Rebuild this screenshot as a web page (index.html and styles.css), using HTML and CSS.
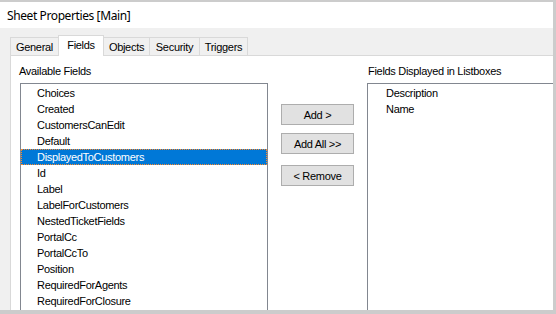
FILE: index.html
```html
<!DOCTYPE html>
<html>
<head>
<meta charset="utf-8">
<link rel="stylesheet" href="styles.css">
</head>
<body>
<div class="window">
  <div class="titlebar">Sheet Properties [Main]</div>
  <div class="client">
    <div class="tabs">
      <div class="tab t-general">General</div>
      <div class="tab t-fields selected">Fields</div>
      <div class="tab t-objects">Objects</div>
      <div class="tab t-security">Security</div>
      <div class="tab t-triggers">Triggers</div>
    </div>
    <div class="panel">
      <div class="label label-left">Available Fields</div>
      <div class="spacer"></div>
      <div class="label label-right">Fields Displayed in Listboxes</div>
      <div class="listbox list-left">
        <div class="item">Choices</div>
        <div class="item">Created</div>
        <div class="item">CustomersCanEdit</div>
        <div class="item">Default</div>
        <div class="item sel">DisplayedToCustomers</div>
        <div class="item">Id</div>
        <div class="item">Label</div>
        <div class="item">LabelForCustomers</div>
        <div class="item">NestedTicketFields</div>
        <div class="item">PortalCc</div>
        <div class="item">PortalCcTo</div>
        <div class="item">Position</div>
        <div class="item">RequiredForAgents</div>
        <div class="item">RequiredForClosure</div>
      </div>
      <div class="buttons">
        <div class="btn b-add">Add &gt;</div>
        <div class="btn b-addall">Add All &gt;&gt;</div>
        <div class="btn b-remove">&lt; Remove</div>
      </div>
      <div class="listbox list-right">
        <div class="item">Description</div>
        <div class="item">Name</div>
      </div>
    </div>
  </div>
</div>
</body>
</html>
```
FILE: styles.css
```css
html, body {
  margin: 0;
  padding: 0;
}
body {
  width: 556px;
  height: 314px;
  overflow: hidden;
  font-family: "Liberation Sans", Arial, sans-serif;
  font-size: 11px;
  color: #000;
}
.window {
  box-sizing: border-box;
  width: 556px;
  height: 314px;
  border-top: 2px solid #cccccc;
  border-right: 3px solid #cccccc;
  border-bottom: 4px solid #cccccc;
  background: #f0f0f0;
  display: flex;
  flex-direction: column;
  overflow: hidden;
}
.titlebar {
  height: 26px;
  flex: none;
  background: #ffffff;
  padding-left: 7px;
  display: flex;
  align-items: center;
  font-family: "Noto Sans", "Open Sans", sans-serif;
  font-size: 12px;
  letter-spacing: -0.4px;
  color: #000;
}
.client {
  flex: 1;
  min-height: 0;
  display: flex;
  flex-direction: column;
  padding: 7px 0 0 10px;
}
.tabs {
  flex: none;
  height: 20px;
  display: flex;
  align-items: flex-end;
  position: relative;
  z-index: 1;
}
.tab {
  box-sizing: border-box;
  height: 18px;
  border: 1px solid #d9d9d9;
  border-bottom: none;
  margin-right: -1px;
  background: #f0f0f0;
  display: flex;
  align-items: center;
  justify-content: center;
  letter-spacing: -0.3px;
  padding-top: 1px;
}
.t-general { width: 49px; }
.t-fields { width: 46px; }
.t-objects { width: 47px; }
.t-security { width: 51px; }
.t-triggers { width: 49px; }
.tab.selected {
  height: 21px;
  margin-bottom: -1px;
  background: #ffffff;
  padding-top: 0;
  padding-bottom: 3px;
}
.panel {
  flex: 1;
  min-height: 0;
  background: #ffffff;
  border-top: 1px solid #d9d9d9;
  border-left: 1px solid #d9d9d9;
  display: grid;
  grid-template-columns: 248px 73px 1fr;
  grid-template-rows: 14px 1fr;
  column-gap: 13px;
  row-gap: 5px;
  padding: 8px 0 0 9px;
  overflow: hidden;
}
.label {
  line-height: 14px;
  letter-spacing: -0.3px;
  white-space: nowrap;
}
.label-left { margin-left: -1px; }
.label-right { margin-left: 1px; }
.listbox {
  box-sizing: border-box;
  border: 1px solid #828790;
  border-bottom: none;
  padding-top: 1px;
  height: 240px;
  overflow: hidden;
}
.list-right {
  margin-right: -6px;
}
.item {
  box-sizing: border-box;
  height: 16px;
  line-height: 16px;
  padding-left: 16px;
  letter-spacing: -0.3px;
  white-space: nowrap;
}
.list-right .item {
  padding-left: 18px;
}
.item.sel {
  background: #0078d7;
  color: #ffffff;
  border: 1px dotted #ff8a2a;
  line-height: 14px;
  padding-left: 15px;
}
.buttons {
  display: flex;
  flex-direction: column;
  padding-top: 21px;
}
.btn {
  box-sizing: border-box;
  height: 21px;
  border: 1px solid #adadad;
  background: #e1e1e1;
  display: flex;
  align-items: center;
  justify-content: center;
  letter-spacing: -0.3px;
}
.b-addall { margin-top: 8px; }
.b-remove { margin-top: 11px; }
```
